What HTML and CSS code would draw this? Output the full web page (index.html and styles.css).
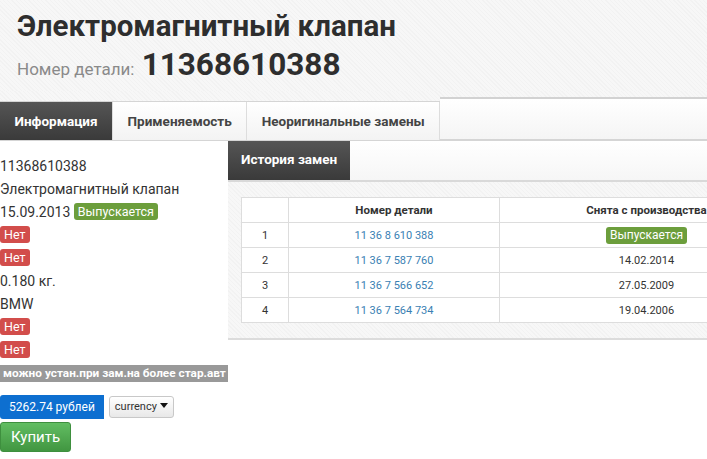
FILE: index.html
```html
<!DOCTYPE html>
<html lang="ru">
  <head>
    <meta charset="UTF-8" />
    <meta name="viewport" content="width=device-width, initial-scale=1.0" />
    <title>Электромагнитный клапан</title>
    <link rel="stylesheet" href="styles.css">
  </head>
  <body>
    <!-- Part header -->
    <div class="part-header textured">
      <h1>Электромагнитный клапан</h1>
      <div class="part-number">Номер детали: <strong>11368610388</strong></div>
    </div>

    <!-- Main tabs -->
    <div class="tabbar textured">
      <ul class="tabs">
        <li class="active">Информация</li>
        <li>Применяемость</li>
        <li>Неоригинальные замены</li>
      </ul>
      <div class="tabbar-rest"></div>
    </div>

    <div class="content">
      <!-- Part info -->
      <div class="info">
        <div class="line">11368610388</div>
        <div class="line">Электромагнитный клапан</div>
        <div class="line">15.09.2013 <span class="badge badge-success">Выпускается</span></div>
        <div class="line"><span class="badge badge-danger">Нет</span></div>
        <div class="line"><span class="badge badge-danger">Нет</span></div>
        <div class="line">0.180 кг.</div>
        <div class="line">BMW</div>
        <div class="line"><span class="badge badge-danger">Нет</span></div>
        <div class="line"><span class="badge badge-danger">Нет</span></div>
        <div class="line"><span class="badge badge-default">можно устан.при зам.на более стар.авт</span></div>
        <div class="price-row">
          <span class="btn-price">5262.74 рублей</span>
          <span class="btn-currency">currency <span class="caret"></span></span>
        </div>
        <span class="btn-buy">Купить</span>
      </div>

      <!-- Replacement history -->
      <div class="history">
        <div class="subtabs">
          <span class="subtab active">История замен</span>
        </div>
        <div class="panel textured">
          <table class="replacements">
            <thead>
              <tr>
                <th class="col-num"></th>
                <th class="col-part">Номер детали</th>
                <th>Снята с производства</th>
              </tr>
            </thead>
            <tbody>
              <tr>
                <td>1</td>
                <td><a href="#">11 36 8 610 388</a></td>
                <td><span class="badge badge-success">Выпускается</span></td>
              </tr>
              <tr>
                <td>2</td>
                <td><a href="#">11 36 7 587 760</a></td>
                <td>14.02.2014</td>
              </tr>
              <tr>
                <td>3</td>
                <td><a href="#">11 36 7 566 652</a></td>
                <td>27.05.2009</td>
              </tr>
              <tr>
                <td>4</td>
                <td><a href="#">11 36 7 564 734</a></td>
                <td>19.04.2006</td>
              </tr>
            </tbody>
          </table>
        </div>
      </div>
    </div>
  </body>
</html>
```

FILE: styles.css
```css
body {
  margin: 0;
  font-family: Roboto, "Liberation Sans", sans-serif;
  color: #333;
  background: #fff;
  overflow: hidden;
}

.textured {
  background-color: #f7f7f7;
  background-image: repeating-linear-gradient(45deg, rgba(0, 0, 0, 0.018) 0 1px, transparent 1px 3px);
}

.part-header {
  padding: 7px 17px 0;
  height: 91px;
  box-sizing: border-box;
}

.part-header h1 {
  margin: 0;
  font-size: 29.5px;
  line-height: 38px;
  font-weight: bold;
  color: #2e2e2e;
}

.part-number {
  font-size: 17px;
  color: #8a8a8a;
  line-height: 40px;
}

.part-number strong {
  font-size: 31.5px;
  color: #2e2e2e;
  margin-left: 3px;
}

.tabbar {
  display: flex;
  align-items: flex-start;
  height: 50px;
}

.tabs {
  display: flex;
  list-style: none;
  margin: 10px 0 0;
  padding: 0;
  border-top: 1px solid #d5d5d5;
  border-bottom: 1px solid #d5d5d5;
  background: linear-gradient(#fff, #f3f3f3);
}

.tabs li {
  height: 38px;
  line-height: 38px;
  padding: 0 14.5px;
  font-size: 13.5px;
  font-weight: bold;
  color: #444;
  border-right: 1px solid #ddd;
}

.tabs li.active {
  background: linear-gradient(#555, #3a3a3a);
  color: #fff;
}

.tabbar-rest {
  flex: 1;
  margin-top: 6px;
  height: 40px;
  border-top: 2px solid #d2d2d2;
  border-bottom: 2px solid #d5d5d5;
  background: linear-gradient(#fff, #f5f5f5);
}

.content {
  display: flex;
  align-items: flex-start;
}

.info {
  width: 228px;
  flex: none;
  overflow: hidden;
  background: #fff;
  padding-top: 14px;
  font-size: 14px;
  height: 320px;
}

.line {
  height: 23px;
  line-height: 23px;
  white-space: nowrap;
}

.badge {
  display: inline-block;
  padding: 1px 4px;
  line-height: 15px;
  font-size: 12.5px;
  color: #fff;
  border-radius: 3px;
  vertical-align: 1px;
}

.badge-success {
  background: #6c9e3c;
}

.badge-danger {
  background: #d24d4b;
}

.badge-default {
  background: #999;
  font-weight: bold;
  font-size: 11.8px;
  border-radius: 0;
  padding: 1px 3px;
}

.price-row {
  display: flex;
  align-items: center;
  gap: 5px;
  margin-top: 10px;
}

.btn-price {
  background: #0d6fd0;
  color: #fff;
  font-size: 12px;
  padding: 4px 9px;
  line-height: 16px;
  border-radius: 3px 0 0 3px;
}

.btn-currency {
  font-size: 11px;
  color: #333;
  padding: 2px 5px;
  line-height: 16px;
  border: 1px solid #c8c8c8;
  border-radius: 3px;
  background: linear-gradient(#fff, #e8e8e8);
}

.caret {
  display: inline-block;
  width: 0;
  height: 0;
  border-left: 4px solid transparent;
  border-right: 4px solid transparent;
  border-top: 5px solid #111;
  vertical-align: 2px;
}

.btn-buy {
  display: inline-block;
  margin-top: 3px;
  padding: 0 10px;
  line-height: 28px;
  font-size: 15px;
  color: #fff;
  border: 1px solid #3e8f3e;
  border-radius: 3px;
  background: linear-gradient(#62bd62, #419641);
}

.history {
  flex: 1;
  min-width: 0;
  overflow: hidden;
}

.subtabs {
  display: flex;
  border-bottom: 2px solid #d9d9d9;
  background: linear-gradient(#fff, #f6f6f6);
}

.subtab {
  height: 39px;
  line-height: 36px;
  padding: 0 13px;
  font-size: 13.5px;
  font-weight: bold;
  color: #fff;
  background: linear-gradient(#555, #3a3a3a);
}

.panel {
  padding: 15px 0 15px 13px;
  border-bottom: 2px solid #dcdcdc;
}

.replacements {
  width: 553px;
  border-collapse: collapse;
  background: #fff;
  font-size: 11px;
  text-align: center;
}

.replacements th,
.replacements td {
  height: 24px;
  padding: 0;
  border: 1px solid #ddd;
}

.replacements th {
  font-weight: bold;
  font-size: 11.5px;
}

.replacements .col-num {
  width: 46px;
}

.replacements .col-part {
  width: 210px;
}

.replacements a {
  color: #3a7fb3;
  text-decoration: none;
}

.replacements .badge {
  font-size: 12px;
  padding: 1px 4px;
  vertical-align: 0;
}
```
